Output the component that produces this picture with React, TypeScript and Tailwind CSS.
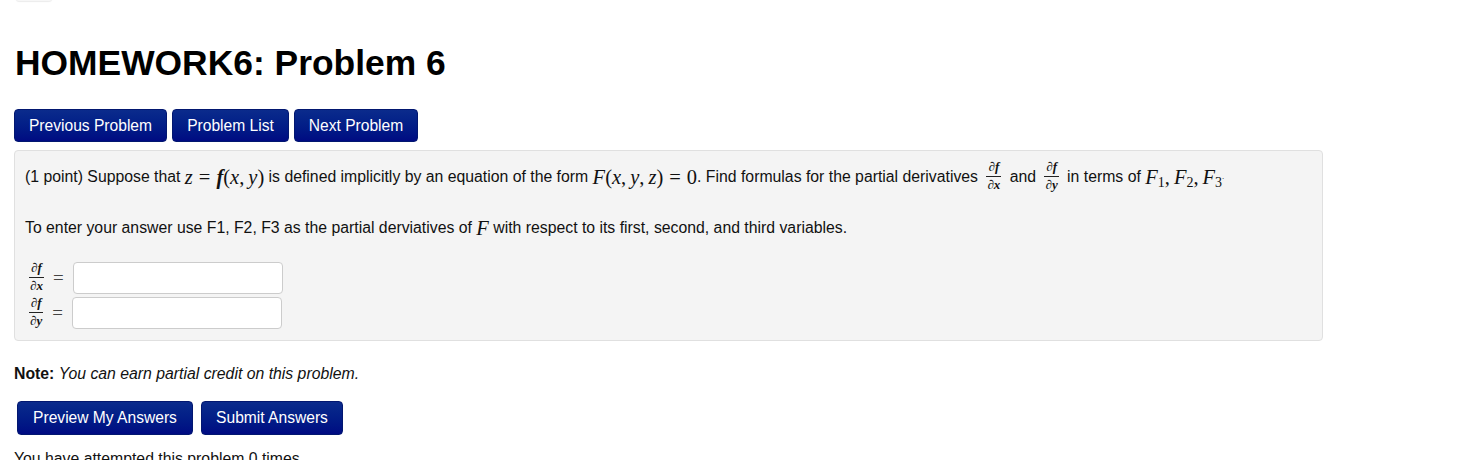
import React from "react";

const M = ({ children, className = "" }: { children: React.ReactNode; className?: string }) => (
  <span className={`font-['Liberation_Serif',serif] italic text-[20.5px] ${className}`}>{children}</span>
);
const R = ({ children }: { children: React.ReactNode }) => (
  <span className="not-italic">{children}</span>
);
const Eq = () => <span className="not-italic mx-[6px]">=</span>;
const Cm = () => <span className="not-italic mr-[4px]">,</span>;

const Frac = ({ num, den, size = "text-[13px]" }: { num: string; den: string; size?: string }) => (
  <span className={`inline-flex flex-col items-center align-middle font-['Liberation_Serif',serif] italic font-bold ${size} leading-[1.1] mx-[4px] -translate-y-[1px]`}>
    <span className="px-[1px] pb-[1px]">{num}</span>
    <span className="self-stretch border-t border-[#222]" />
    <span className="px-[1px] pt-[1px]">{den}</span>
  </span>
);

const Btn = ({ children, className = "" }: { children: React.ReactNode; className?: string }) => (
  <button
    className={`h-[33px] rounded-[4px] border border-[#021770] bg-gradient-to-b from-[#0b2b8c] to-[#000a82] text-white text-[15.6px] leading-none ${className}`}
  >
    {children}
  </button>
);

export default function App() {
  return (
    <div className="relative min-h-[460px] w-[1458px] overflow-hidden bg-white font-['Liberation_Sans',Arial,sans-serif] text-[#111]">
      <div className="absolute left-[16px] top-[-6px] h-[7px] w-[36px] rounded-b-[3px] bg-[#f7f7f7] shadow-[0_1px_1px_rgba(0,0,0,0.08)]" />
      <div className="pl-[14px] pt-[43px]">
        <h1 className="ml-[1px] text-[35.4px] font-bold leading-[40px] text-black">HOMEWORK6: Problem 6</h1>
        <div className="mt-[26px] flex gap-[5px]">
          <Btn className="w-[153px]">Previous Problem</Btn>
          <Btn className="w-[117px]">Problem List</Btn>
          <Btn className="w-[124px]">Next Problem</Btn>
        </div>
        <div className="mt-[8px] h-[191px] w-[1309px] rounded-[4px] border border-[#e0e0e0] bg-[#f4f4f4] pl-[10px] pt-[10px] text-[15.8px]">
          <div className="flex h-[32px] items-center whitespace-nowrap">
            <span>(1 point) Suppose that&nbsp;</span>
            <M>z<Eq /><b className="font-bold">f</b><R>(</R>x<Cm />y<R>)</R></M>
            <span>&nbsp;is defined implicitly by an equation of the form&nbsp;</span>
            <M>F<R>(</R>x<Cm />y<Cm />z<R>)</R><Eq /><R>0</R></M>
            <span>. Find formulas for the partial derivatives&nbsp;</span>
            <Frac num="∂f" den="∂x" />
            <span>&nbsp;and&nbsp;</span>
            <Frac num="∂f" den="∂y" />
            <span>&nbsp;in terms of&nbsp;</span>
            <M>
              F<sub className="not-italic text-[14px]">1</sub><Cm />F<sub className="not-italic text-[14px]">2</sub>
              <Cm />F<sub className="not-italic text-[14px]">3</sub>
            </M>
            <span className="text-[8px]">.</span>
          </div>
          <div className="mt-[25px] flex h-[20px] items-center whitespace-nowrap">
            <span>To enter your answer use F1, F2, F3 as the partial derviatives of&nbsp;</span>
            <M>F</M>
            <span>&nbsp;with respect to its first, second, and third variables.</span>
          </div>
          <div className="mt-[24px] flex flex-col gap-[3px]">
            <div className="flex items-center">
              <div className="flex w-[48px] items-center">
                <Frac num="∂f" den="∂x" />
                <span className="ml-[5px] font-['Liberation_Serif',serif] text-[19px] text-[#444]">=</span>
              </div>
              <input className="h-[32px] w-[210px] rounded-[4px] border border-[#cccccc] bg-white" />
            </div>
            <div className="flex items-center">
              <div className="flex w-[47px] items-center">
                <Frac num="∂f" den="∂y" />
                <span className="ml-[5px] font-['Liberation_Serif',serif] text-[19px] text-[#444]">=</span>
              </div>
              <input className="h-[32px] w-[210px] rounded-[4px] border border-[#cccccc] bg-white" />
            </div>
          </div>
        </div>
        <p className="mt-[23px] text-[15.8px] leading-[20px] text-[#111]">
          <b>Note:</b> <i>You can earn partial credit on this problem.</i>
        </p>
        <div className="mt-[17px] ml-[3px] flex gap-[8px]">
          <Btn className="h-[34px] w-[176px]">Preview My Answers</Btn>
          <Btn className="h-[34px] w-[142px]">Submit Answers</Btn>
        </div>
        <p className="mt-[14px] text-[15.8px] leading-[20px]">You have attempted this problem 0 times.</p>
      </div>
    </div>
  );
}
